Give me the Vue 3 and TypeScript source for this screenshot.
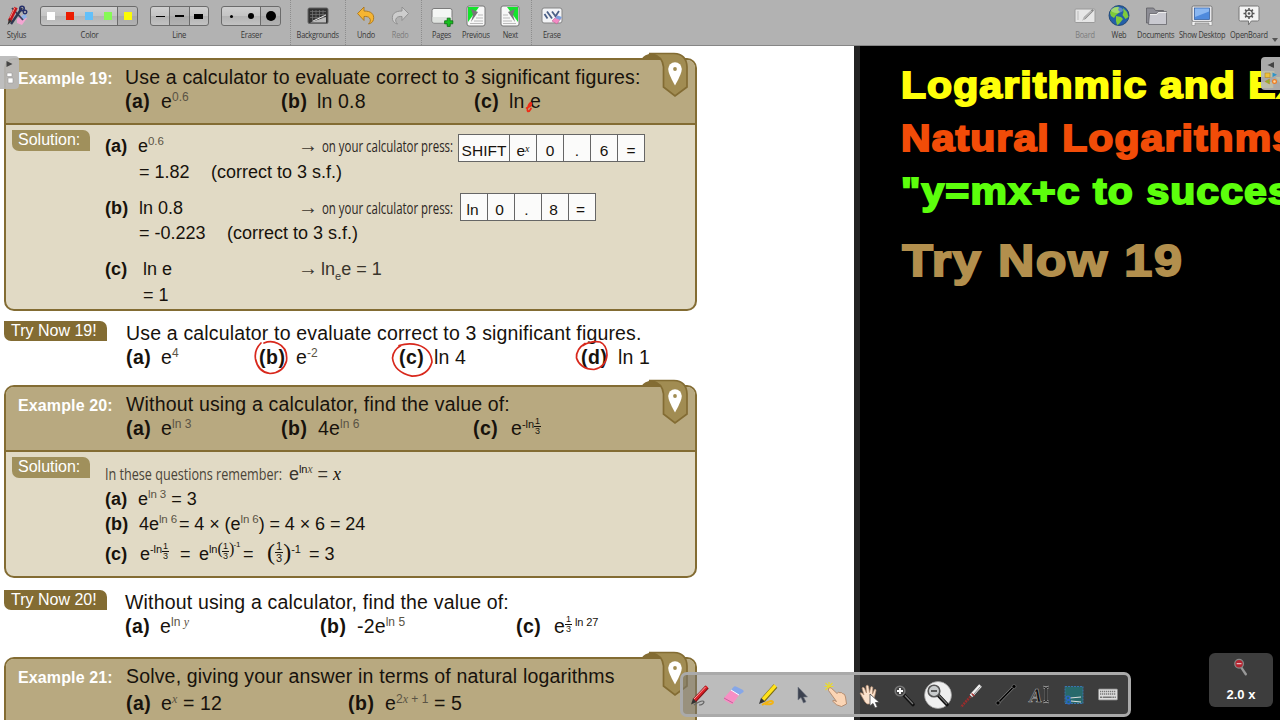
<script setup lang="ts">
interface Part { t: string; c?: string; d?: string }
interface Cell { w: number; c?: string; p: Part[] }
interface Line { c: string; cells: Cell[] }

const b = (t: string): Part => ({ t, c: 'b' })
const n = (t: string): Part => ({ t })
const sup = (t: string): Part => ({ t, c: 'sup' })
const sups = (t: string): Part => ({ t, c: 'sup dark' })
const cell = (w: number, ...p: Part[]): Cell => ({ w, p })
const cond = (w: number, c: string, t: string): Cell => ({ w, c: 'cond ' + c, p: [n(t)] })

const heads: Record<string, Line[]> = {
  h19: [
    { c: 'big', cells: [cell(520, n('Use a calculator to evaluate correct to 3 significant figures:'))] },
    { c: 'big two', cells: [cell(36, b('(a)')), cell(120, n('e'), sup('0.6')), cell(36, b('(b)')), cell(157, n('ln 0.8')), cell(35, b('(c)')), cell(60, n('ln e'))] },
  ],
  t19: [
    { c: 'big', cells: [cell(520, n('Use a calculator to evaluate correct to 3 significant figures.'))] },
    { c: 'big two', cells: [cell(35, b('(a)')), cell(98, n('e'), sup('4')), cell(37, b('(b)')), cell(103, n('e'), sup('-2')), cell(35, b('(c)')), cell(147, n('ln 4')), cell(37, b('(d)')), cell(50, n('ln 1'))] },
  ],
  h20: [
    { c: 'big', cells: [cell(520, n('Without using a calculator, find the value of:'))] },
    { c: 'big two', cells: [cell(35, b('(a)')), cell(120, n('e'), sup('ln 3')), cell(37, b('(b)')), cell(155, n('4e'), sup('ln 6')), cell(38, b('(c)')), cell(60, n('e'), sups('-ln'), { t: '1', d: '3', c: 'frac' })] },
  ],
  t20: [
    { c: 'big', cells: [cell(520, n('Without using a calculator, find the value of:'))] },
    { c: 'big two', cells: [cell(35, b('(a)')), cell(160, n('e'), sup('ln '), { t: 'y', c: 'sup it' }), cell(37, b('(b)')), cell(159, n('-2e'), sup('ln 5')), cell(38, b('(c)')), cell(80, n('e'), { t: '1', d: '3', c: 'frac' }, sups(' ln 27'))] },
  ],
  h21: [
    { c: 'big', cells: [cell(520, n('Solve, giving your answer in terms of natural logarithms'))] },
    { c: 'big two', cells: [cell(35, b('(a)')), cell(187, n('e'), { t: 'x', c: 'sup it' }, n(' = 12')), cell(37, b('(b)')), cell(120, n('e'), sup('2'), { t: 'x', c: 'sup it' }, sup(' + 1'), n(' = 5'))] },
  ],
}

const body19: Line[] = [
  { c: 'l1', cells: [cell(33, b('(a)')), cell(161, n('e'), sup('0.6')), cell(23, { t: '→', c: 'arr' }), cond(135, 'c1', 'on your calculator press:')] },
  { c: 'l2', cells: [cell(34), cell(72, n('= 1.82')), cell(140, n('(correct to 3 s.f.)'))] },
  { c: 'l3', cells: [cell(34, b('(b)')), cell(160, n('ln 0.8')), cell(23, { t: '→', c: 'arr' }), cond(135, 'c1', 'on your calculator press:')] },
  { c: 'l4', cells: [cell(34), cell(88, n('= -0.223')), cell(140, n('(correct to 3 s.f.)'))] },
  { c: 'l5', cells: [cell(38, b('(c)')), cell(156, n('ln e')), cell(22, { t: '→', c: 'arr' }), cell(80, { t: 'ln', c: 'mid' }, { t: 'e', c: 'sub' }, { t: 'e = 1', c: 'mid' })] },
  { c: 'l6', cells: [cell(38), cell(60, n('= 1'))] },
]
const body20: Line[] = [
  { c: 'm1', cells: [cond(184, 'c2', 'In these questions remember:'), cell(70, { t: 'e', c: 'mid' }, { t: 'ln', c: 'sup hi dark' }, { t: 'x', c: 'sup hi it' }, { t: ' = ', c: 'mid' }, { t: 'x', c: 'itx' })] },
  { c: 'm2', cells: [cell(33, b('(a)')), cell(80, n('e'), sup('ln 3'), n(' = 3'))] },
  { c: 'm3', cells: [cell(34, b('(b)')), cell(40, n('4e'), sup('ln 6')), cell(220, n('= 4 × (e'), sup('ln 6'), n(') = 4 × 6 = 24'))] },
  {
    c: 'm4', cells: [cell(35, b('(c)')), cell(40, n('e'), sups('-ln'), { t: '1', d: '3', c: 'frac' }), cell(19, n('=')),
      cell(44, n('e'), sups('ln'), { t: '(', c: 'paren up' }, { t: '1', d: '3', c: 'frac' }, { t: ')', c: 'paren up' }, { t: '-1', c: 'sup dark top' }),
      cell(24, n('=')), cell(42, { t: '(', c: 'paren big-p' }, { t: '1', d: '3', c: 'frac large' }, { t: ')', c: 'paren big-p' }, sups('-1')), cell(40, n('= 3'))],
  },
]
const keys1 = ['SHIFT', 'ex', '0', '.', '6', '=']
const keys2 = ['ln', '0', '.', '8', '=']

const swatches = ['#ffffff', '#ec1c00', '#62c0fa', '#86f955', '#fcfc04']
interface Tool { id: string; label: string; w: number; gap?: number; end?: number; sep?: boolean; off?: boolean }
const leftTools: Tool[] = [
  { id: 'bg', label: 'Backgrounds', w: 54, sep: true },
  { id: 'undo', label: 'Undo', w: 34, gap: 3, sep: true },
  { id: 'redo', label: 'Redo', w: 34, end: 4, off: true },
  { id: 'pages', label: 'Pages', w: 34, gap: 3, sep: true },
  { id: 'prev', label: 'Previous', w: 34 },
  { id: 'next', label: 'Next', w: 34, end: 4 },
  { id: 'erase', label: 'Erase', w: 34, gap: 3, sep: true },
]
const rightTools: Tool[] = [
  { id: 'board', label: 'Board', w: 34, off: true },
  { id: 'web', label: 'Web', w: 34 },
  { id: 'docs', label: 'Documents', w: 40 },
  { id: 'desk', label: 'Show Desktop', w: 53 },
  { id: 'open', label: 'OpenBoard', w: 41 },
]
const palette = ['pen', 'rub', 'marker', 'arrow', 'touch', 'palm', 'zin', 'zout', 'laser', 'line', 'text', 'capture', 'keyb']
</script>

<template>
  <div class="app">
    <header class="bar">
      <div class="tool stylus">
        <svg width="22" height="22" viewBox="0 0 22 22">
          <path d="M11 14l5-4 5 3-5 7-5-2z" fill="#f3a6d2" /><path d="M15 11l4-2 2 3-4 3z" fill="#8fb4ea" />
          <path d="M6 3l11 12" stroke="#39425c" stroke-width="1.800" /><path d="M16 3L5 19" stroke="#2f3650" stroke-width="2.400" />
          <circle cx="16" cy="3.500" r="2.200" fill="none" stroke="#27306a" stroke-width="1.600" /><circle cx="19" cy="7" r="1.800" fill="none" stroke="#27306a" stroke-width="1.400" />
          <path d="M10 2.500L3.500 16" stroke="#c4161c" stroke-width="3.600" /><path d="M3 14L1.500 20l4.500-4z" fill="#333" />
          <path d="M9 2.500L3.800 13" stroke="#f28a7c" stroke-width="1" />
        </svg>
        <span class="lab">Stylus</span>
      </div>
      <div class="group color">
        <div class="box"><i v-for="s in swatches" :key="s" class="sw"><b :style="{ background: s }"></b></i></div>
        <span class="lab">Color</span>
      </div>
      <div class="group lines">
        <div class="box"><i><b class="ln a"></b></i><i><b class="ln b2"></b></i><i><b class="ln c3"></b></i></div>
        <span class="lab">Line</span>
      </div>
      <div class="group era">
        <div class="box"><i><b class="dot d1"></b></i><i><b class="dot d2"></b></i><i><b class="dot d3"></b></i></div>
        <span class="lab">Eraser</span>
      </div>
      <div class="tools first">
        <div v-for="t in leftTools" :key="t.id" class="slot" :class="{ sep: t.sep }">
          <div class="tool" :class="{ off: t.off }" :style="{ width: t.w + 'px', marginLeft: (t.gap ?? 0) + 'px', marginRight: (t.end ?? 0) + 'px' }">
            <svg width="24" height="22" viewBox="0 0 24 22">
              <g v-if="t.id === 'bg'">
                <rect x="2" y="3" width="20" height="15.500" rx="1.500" fill="#333" stroke="#666" />
                <path d="M4 6.500h16M4 9.500h16M4 12.500h16M6.500 5v12M10 5v12M13.500 5v12M17 5v12" stroke="#777" stroke-width=".7" />
                <path d="M4 17.500L20 12v5.500z" fill="#bbb" /><path d="M7 16l13-6" stroke="#e5e5e5" />
              </g>
              <path v-else-if="t.id === 'undo'" d="M3.500 8.500L10 2v4c7 0 10.500 3 9.500 8.500-.5 2.500-2.500 4-5 4.500 2-2 2.500-4 1-6-1-1.300-3-1.700-5.500-1.500v4z" fill="#f6b532" stroke="#a9751c" stroke-width=".9" />
              <path v-else-if="t.id === 'redo'" d="M20.500 8.500L14 2v4C7 6 3.500 9 4.500 14.500c.5 2.500 2.500 4 5 4.500-2-2-2.500-4-1-6 1-1.300 3-1.700 5.500-1.500v4z" fill="#cdcdcd" stroke="#8c8c8c" stroke-width=".9" />
              <g v-else-if="t.id === 'pages'">
                <rect x="2" y="3.500" width="20" height="14.500" rx="2" fill="#f4f6f4" stroke="#7b7b7b" /><path d="M2.500 12h19v4.500q0 1-1 1h-17q-1 0-1-1z" fill="#dfe3df" />
                <path d="M17.200 13.200h3v2.600h2.600v3h-2.600v2.600h-3v-2.600h-2.600v-3h2.600z" fill="#17c01f" stroke="#0a6b10" stroke-width=".8" />
              </g>
              <g v-else-if="t.id === 'prev' || t.id === 'next'" :transform="t.id === 'next' ? 'matrix(-1 0 0 1 24 0)' : undefined">
                <rect x="3" y="1" width="18" height="20" rx="2" fill="#f7f7f7" stroke="#777" />
                <path d="M4 2h11L4 17z" fill="#14e32c" /><path d="M7 4l7 3-7 10 2-7z" fill="#777" />
                <path d="M14 10h5M12 13h7M10 16h9M6 18.500h13" stroke="#aaa" stroke-width=".8" />
              </g>
              <g v-else>
                <rect x="2" y="3" width="20" height="15" rx="2" fill="#f3f4f6" stroke="#858585" />
                <path d="M4.500 9l3 4.500M7 6.500l5 7M12 6.500l3 4M19 6l-4 6" stroke="#4a5f86" stroke-width="1.800" fill="none" />
                <path d="M12 16l5-5 4 2-4 6z" fill="#f48ac4" stroke="#b35a8b" stroke-width=".5" /><path d="M15 13l2.500-2.500L22 12l-2 3z" fill="#7ea1dd" />
              </g>
            </svg>
            <span class="lab">{{ t.label }}</span>
          </div>
        </div>
      </div>
      <div class="tools last">
        <div v-for="t in rightTools" :key="t.id" class="tool" :class="{ off: t.off }" :style="{ width: t.w + 'px' }">
          <svg width="24" height="22" viewBox="0 0 24 22">
            <g v-if="t.id === 'board'">
              <rect x="2" y="4" width="20" height="13.500" rx="1" fill="#e6e6e6" stroke="#9a9a9a" /><path d="M5 6v9" stroke="#bbb" />
              <path d="M9 15.500l2-3.500L19.500 4 21 5.500 12.500 14z" fill="#888" /><path d="M9.500 15l9-9" stroke="#fff" stroke-width=".7" />
            </g>
            <g v-else-if="t.id === 'web'">
              <circle cx="12" cy="10.500" r="10" fill="#245fa8" stroke="#173e6c" stroke-width=".8" />
              <path d="M4 5q4-4 8-3l-1 3 2 2-4 3-2 3-3-2-1-3zM9 11l5 1 2 2-4 5-2 1-1-4zM16 3l4 4 1.500 5-3 2-3-4 1-3z" fill="#7fcb3a" />
              <ellipse cx="10" cy="5" rx="6" ry="3" fill="#fff" opacity=".28" />
            </g>
            <g v-else-if="t.id === 'docs'">
              <path d="M2.500 18V3h7l2 2.500h8V18z" fill="#8d8d95" stroke="#5d5d63" stroke-width=".8" />
              <path d="M5.500 8.500h7l1.500-2h8.500v13h-18z" fill="#c9c9d0" stroke="#66666c" stroke-width=".8" /><path d="M6 9.500h7l1.500-2h8" stroke="#eee" fill="none" />
            </g>
            <g v-else-if="t.id === 'desk'">
              <rect x="2" y="1" width="20" height="15.500" rx="1.500" fill="#e7e7ea" stroke="#777" /><rect x="4.500" y="3" width="15" height="11.500" fill="#4f8add" stroke="#2d5799" stroke-width=".7" />
              <path d="M5 3.500h14v3L5 12z" fill="#8ab7f2" /><path d="M2 16.500v4h3v-2.500h14v2.500h3v-4z" fill="#f2f2f2" stroke="#888" stroke-width=".6" />
            </g>
            <g v-else>
              <path d="M3.500 1h17q1.500 0 1.500 1.500v12q0 1.500-1.500 1.500h-6.200L11.500 20v-4h-8Q2 16 2 14.500v-12Q2 1 3.500 1z" fill="#f4f4f4" stroke="#777" />
              <g stroke="#555" stroke-width="1.500"><path d="M12 3v11M6.500 8.500h11M8.100 4.600l7.800 7.800M15.900 4.600l-7.800 7.800" /></g>
              <circle cx="12" cy="8.500" r="3.300" fill="#f4f4f4" stroke="#555" stroke-width="1.300" /><circle cx="12" cy="8.500" r="1.300" fill="#555" />
            </g>
          </svg>
          <span class="lab">{{ t.label }}</span>
        </div>
        <svg class="drop" width="6" height="4"><path d="M0 0h6L3 4z" fill="#555" /></svg>
      </div>
    </header>

    <main class="board">
      <section class="page">
        <template v-for="num in [19, 20, 21]" :key="num">
          <article class="card" :class="'k' + num">
            <div class="head">
              <div class="side"><span class="ex">Example {{ num }}:</span></div>
              <div>
                <div v-for="(l, i) in heads['h' + num]" :key="i" class="line" :class="l.c"><span v-for="(s, j) in l.cells" :key="j" class="cell" :style="{ width: s.w + 'px' }"><template v-for="(p, k) in s.p" :key="k"><span v-if="p.d" :class="p.c"><span class="num">{{ p.t }}</span><span>{{ p.d }}</span></span><span v-else :class="p.c">{{ p.t }}</span></template></span></div>
              </div>
            </div>
            <div v-if="num < 21" class="body">
              <div class="side"><span class="sol">Solution:</span></div>
              <div class="work">
                <div v-for="(l, i) in (num === 19 ? body19 : body20)" :key="i" class="line" :class="l.c"><span v-for="(s, j) in l.cells" :key="j" class="cell" :class="s.c" :style="{ width: s.w + 'px' }"><template v-for="(p, k) in s.p" :key="k"><span v-if="p.d" :class="p.c"><span class="num">{{ p.t }}</span><span>{{ p.d }}</span></span><span v-else :class="p.c">{{ p.t }}</span></template></span></div>
                <template v-if="num === 19">
                  <div class="keys one"><span v-for="k in keys1" :key="k" :class="{ shift: k === 'SHIFT' }"><template v-if="k === 'ex'">e<em>x</em></template><template v-else>{{ k }}</template></span></div>
                  <div class="keys two-k"><span v-for="k in keys2" :key="k">{{ k }}</span></div>
                </template>
              </div>
            </div>
            <svg class="ribbon" width="54" height="46" viewBox="0 0 54 46">
              <path d="M3 8Q6 1.500 15 1.500L26 8z" fill="#836c33" />
              <path d="M11 1.500H36Q48.500 2 49 15V35L37 44 25.500 35V15Q24.500 4 14 2z" fill="#a18c52" stroke="#836c33" stroke-width="1.700" />
              <path d="M37 33.500Q30.200 21.500 30.200 17a6.800 6.800 0 0 1 13.600 0Q43.800 21.500 37 33.500z" fill="#fff" /><circle cx="37" cy="17" r="1.900" fill="#a18c52" />
            </svg>
          </article>
          <article v-if="num < 21" class="try" :class="'y' + num">
            <div class="side"><span class="tag">Try Now {{ num }}!</span></div>
            <div class="ask">
              <div v-for="(l, i) in heads['t' + num]" :key="i" class="line" :class="l.c"><span v-for="(s, j) in l.cells" :key="j" class="cell" :style="{ width: s.w + 'px' }"><template v-for="(p, k) in s.p" :key="k"><span v-if="p.d" :class="p.c"><span class="num">{{ p.t }}</span><span>{{ p.d }}</span></span><span v-else :class="p.c">{{ p.t }}</span></template></span></div>
            </div>
          </article>
        </template>
      </section>
      <section class="black">
        <p class="yel">Logarithmic and Ex</p>
        <p class="ora">Natural Logarithms</p>
        <p class="gre">"y=mx+c to succes</p>
        <p class="tan">Try Now 19</p>
      </section>
      <svg class="ink" width="700" height="400" viewBox="0 0 700 400" fill="none" stroke="#d8281c" stroke-width="1.700" stroke-linecap="round">
        <path d="M526.500 108q5-1.500 5-4.500-1-2-3 2-2 5-.5 6 1.500 0 3-3" stroke="#f02a14" />
        <path d="M261 343Q254 350 255.500 359 258 372 270 373.500 283 373 286.500 361 288 348 278 343.500 271 340 264 343" />
        <path d="M401 345.500Q393 350 392.500 358 394 372 412 376.200 428 376 432 362 431 349 418 345 409 342.500 399 345.500" />
        <path d="M585 343.500Q576 349 576.500 358 580 369 594 369.500 606 367 607 355 607 345 600 342 591 340.500 583 345.500" />
      </svg>
      <div class="tab lt"><svg width="19" height="33"><path d="M6.500 5l6 3-6 3z" fill="#444" /><path d="M7 17h5v3.500H7zM8 22h5v5H8z" fill="#fff" stroke="#999" stroke-width=".6" /></svg></div>
      <div class="tab rt"><svg width="19" height="33"><path d="M13 5L6.500 8l6.500 3z" fill="#444" /><path d="M4 16h5v4.500H4z" fill="#eec23a" stroke="#b5832a" stroke-width=".6" /><path d="M11.500 15.500l4.500 2.300-4.500 2.500z" fill="#2f94c8" /><path d="M8.500 22L4 24.500 8.500 27z" fill="#8cb32e" stroke="#c28a22" stroke-width=".6" /><circle cx="13.500" cy="24.500" r="1.900" fill="#ffd9a0" stroke="#ee7b22" stroke-width="1.200" /></svg></div>
      <div class="palette">
        <span v-for="p in palette" :key="p" class="pi">
          <svg width="30" height="30" viewBox="0 0 30 30">
            <g v-if="p === 'pen'"><path d="M9 25q9-6 10-3-1 3-5 3" fill="none" stroke="#666" stroke-width="1.200" /><path d="M22 7L9.500 20.500" stroke="#7d1014" stroke-width="4.600" /><path d="M22 6.500L9.500 20" stroke="#dc2128" stroke-width="3" /><path d="M20.500 7L9 19" stroke="#f7b5b5" stroke-width=".9" /><path d="M8 18.500l3.500 3.500L6 24.500z" fill="#333" /></g>
            <g v-else-if="p === 'rub'"><path d="M5 18L12 10l8 5-6 8.500q-1 1-3 0l-5-3q-1.500-1-1-2.500z" fill="#f78fc4" /><path d="M12 10l2.500-3q1-1 2.500-.5L24 10q1 .8.500 2L20 15z" fill="#86a7e8" /><path d="M12 10l8 5" stroke="#fff" /><path d="M5 18l9 5" stroke="#c4649a" stroke-width="1" /></g>
            <g v-else-if="p === 'marker'"><path d="M9 25q10-6 11-3 0 3-8 2" fill="none" stroke="#f2b414" stroke-width="2" /><path d="M22.500 6L10 20" stroke="#7a6b10" stroke-width="5" /><path d="M22.500 5.500L10 19.500" stroke="#ffe21c" stroke-width="3.400" /><path d="M8 18l4 3.500L6 24z" fill="#333" /></g>
            <path v-else-if="p === 'arrow'" d="M11 7v13l3-2.500 2.500 5.500 2.500-1.200L16.500 17h4z" fill="#3c4250" stroke="#737984" stroke-width=".6" />
            <g v-else-if="p === 'touch'"><path d="M8 2v9M3.500 6.500h9M4.500 3l7 7M11.500 3l-7 7" stroke="#e8d930" stroke-width="1.100" /><path d="M7.500 8.500q1.500-1.800 3.200 0l5.300 5q1-2 3-.8 1.500-.7 2.500.8 2.500 0 3 3.500l1 7-5 2.500q-5-.5-9-5.500 1-1.500 4 .5L7.500 10.500z" fill="#fbd5b5" stroke="#a97e60" stroke-width=".8" /></g>
            <g v-else-if="p === 'palm'"><path d="M10 22q-3-5-5-9 1.500-1 4 2L7 8q1-1.500 2.300 0l2.200 5L11 6q1.300-1.500 2.500 0l1 6.500L15.800 7q1.300-1 2 .5l-.3 6.500 2-4.500q1.500-.6 1.500 1L19 19q0 3-2 5h-5z" fill="#fbe2cd" stroke="#b58c70" stroke-width=".7" /><path d="M15 14v12l3-2.500 2 4.500 2.400-1.100-2-4.400h4z" fill="#fff" stroke="#444" stroke-width=".8" /></g>
            <g v-else-if="p === 'zin' || p === 'zout'"><circle v-if="p === 'zout'" cx="15" cy="15" r="13.500" fill="#efefef" stroke="#999" stroke-width=".7" /><path d="M15 15l9 9.500" stroke="#111" stroke-width="3.600" stroke-linecap="round" /><path d="M16 15.500l8 8.500" stroke="#777" stroke-width="1.200" /><circle cx="11" cy="11" :r="p === 'zin' ? 4.800 : 5.800" :fill="p === 'zin' ? '#444' : '#c8cbcc'" :stroke="p === 'zin' ? '#777' : '#555'" stroke-width="1.600" /><path v-if="p === 'zin'" d="M8 11h6M11 8v6" stroke="#fff" stroke-width="1.900" /><path v-else d="M8 11h6" stroke="#444" stroke-width="1.700" /></g>
            <g v-else-if="p === 'laser'"><path d="M13.500 16.500L4 27" stroke="#b02a2a" stroke-width="2.500" opacity=".8" stroke-dasharray="2 .8" /><path d="M23.500 5.500L14 16" stroke="#f2f2f2" stroke-width="3.600" /><path d="M23.500 6.500L14 17.500" stroke="#888" stroke-width="1" /><path d="M14.500 13.500l3 2.500" stroke="#a33" stroke-width="1.500" /></g>
            <g v-else-if="p === 'line'" fill="#000" stroke="#8a8a8a" stroke-width=".5"><path d="M6.500 23.500L23.500 6" stroke="#8a8a8a" stroke-width="2.600" /><path d="M6.500 23.500L23.500 6" stroke="#000" stroke-width="1.700" /><circle cx="7" cy="23" r="2" /><circle cx="23" cy="6.500" r="2" /></g>
            <g v-else-if="p === 'text'"><text x="4.500" y="22" class="ai">A</text><path d="M18 7q3 0 3 2v11q0 2-3 2M24 7q-3 0-3 2v11q0 2 3 2" fill="none" stroke="#aaa" stroke-width="2.400" /><path d="M18 7q3 0 3 2v11q0 2-3 2M24 7q-3 0-3 2v11q0 2 3 2" fill="none" stroke="#111" stroke-width="1" /></g>
            <g v-else-if="p === 'capture'"><rect x="6" y="6.500" width="18" height="17" fill="#28696b" stroke="#3c77b8" stroke-width=".9" stroke-dasharray="2 1" /><path d="M11 18l11-1M12 21l10 1" stroke="#ddd" stroke-width="1.100" /><circle cx="9" cy="18" r="1.900" fill="none" stroke="#2b65c4" stroke-width="1.400" /><circle cx="9.500" cy="22" r="1.900" fill="none" stroke="#2b65c4" stroke-width="1.400" /></g>
            <g v-else><rect x="5.500" y="9" width="19" height="11" rx="1" fill="#ddd" stroke="#888" stroke-width=".8" /><path d="M7 11.500h16M7 14h16" stroke="#777" stroke-width="1.500" stroke-dasharray="1.300 .7" /><path d="M7 17.300h16" stroke="#777" stroke-width="1.500" stroke-dasharray="2 .7 9 .7" /></g>
          </svg>
        </span>
      </div>
      <div class="zoom">
        <svg width="20" height="24" viewBox="0 0 20 24"><path d="M9 9l6 9" stroke="#999" stroke-width="2.400" stroke-linecap="round" /><circle cx="8" cy="7" r="4.500" fill="#b32430" stroke="#888" stroke-width="1.300" /><path d="M5.500 7h5" stroke="#eee" stroke-width="1" /></svg>
        <span>2.0 x</span>
      </div>
    </main>
  </div>
</template>

<style scoped>
.app { width: 1280px; height: 720px; overflow: hidden; display: flex; flex-direction: column; font-family: "Liberation Sans", Arial, sans-serif; color: #17120c; background: #fff; }
.bar { height: 45px; flex: none; background: #b2b2b2; border-bottom: 1px solid #868686; display: flex; align-items: flex-start; }
.tool { display: flex; flex-direction: column; align-items: center; padding-top: 5px; flex: none; }
.tool svg { display: block; flex: none; }
.lab { font: 9px/12px "Open Sans", "Noto Sans", sans-serif; letter-spacing: -.3px; color: #383838; white-space: nowrap; margin-top: 2px; transform: scaleX(.82); }
.off .lab { color: #7d7d7d; }
.stylus { width: 33px; margin-right: 7px; }
.group { display: flex; flex-direction: column; align-items: center; padding-top: 6px; flex: none; }
.group .lab { margin-top: 3px; }
.stylus .lab, .group .lab { transform: scaleX(.85); }
.box { box-sizing: border-box; height: 20px; width: 100%; border: 1px solid #6b6b6b; border-radius: 3px; display: flex; background: linear-gradient(#d0d0d0, #c4c4c4 50%, #b4b4b4 52%, #c2c2c2); overflow: hidden; }
.box i { flex: 1; display: flex; align-items: center; justify-content: center; }
.color { width: 98px; margin-right: 12px; }
.lines { width: 59px; margin-right: 12px; }
.era { width: 60px; margin-right: 9px; }
.sw b { width: 8px; height: 8px; }
.sw:last-child, .lines i:nth-child(2), .era i:last-child { border-left: 1px solid #6b6b6b; background: rgba(150, 150, 150, .35); }
.lines i:nth-child(2) { border-right: 1px solid #6b6b6b; }
.ln { background: #000; }
.a { width: 9px; height: 1px; } .b2 { width: 9px; height: 2px; } .c3 { width: 9px; height: 5px; }
.dot { background: #000; border-radius: 50%; }
.d1 { width: 3px; height: 3px; } .d2 { width: 6px; height: 6px; } .d3 { width: 10px; height: 10px; }
.tools { display: flex; }
.slot.sep { border-left: 1px dotted #8d8d8d; height: 45px; }
.last { margin-left: auto; padding-right: 2.5px; }
.drop { align-self: flex-end; margin: 0 0 -1px 2px; }

.board { flex: 1; min-height: 0; display: flex; position: relative; overflow: hidden; }
.page { width: 854px; flex: none; background: #fff; padding: 12px 0 0 4px; box-sizing: border-box; }
.black { flex: 1; min-width: 0; background: #000; border-left: 6px solid #222; padding: 13px 0 0 41px; overflow: hidden; }
.black p { margin: 0; white-space: nowrap; font-weight: 700; font-size: 37.5px; line-height: 53px; letter-spacing: 1px; transform: scaleX(1.092); transform-origin: 0 0; -webkit-text-stroke: 1.9px currentColor; }
.yel { color: #ffff0a; } .ora { color: #f24c08; } .gre { color: #5cff0c; }
.black .tan { color: #b28f4d; font-size: 44.5px; line-height: 60px; margin-top: 13px; padding-left: 1px; letter-spacing: 1.4px; transform: scaleX(1.13); }

.card { position: relative; box-sizing: border-box; width: 693px; border: 2px solid #836c33; border-radius: 10px; background: #e1dac5; }
.head { box-sizing: border-box; display: flex; height: 65px; border-bottom: 2px solid #836c33; border-radius: 8px 8px 0 0; background: #b8a980; padding-top: 4px; }
.k19 { height: 253px; } .k20 { height: 193px; } .k21 { height: 100px; }
.k21 .head { height: 75px; } .k21 .two { margin-top: 3px; }
.side { flex: none; width: 120px; }
.k19 .head .side { width: 119px; }
.ex { display: block; margin-left: 12px; font-weight: 700; font-size: 16px; letter-spacing: .13px; line-height: 30px; color: #fff; white-space: nowrap; }
.body { display: flex; padding-top: 5px; }
.body .side, .k19 .body .side { width: 99px; }
.sol, .tag { display: block; color: #fff; font-size: 16px; line-height: 20px; border-radius: 0 7px 0 7px; box-sizing: border-box; white-space: nowrap; }
.sol { width: 78px; height: 21px; margin-left: 6px; padding-left: 6px; background: #a0905c; }
.tag { width: 103px; height: 20px; background: #836c33; padding-left: 7px; }
.try { display: flex; height: 64px; padding-top: 10px; }
.try .side { width: 122px; }
.try .ask { margin-top: -1px; }
.y20 { height: 67px; padding-top: 12px; }
.y20 .side { width: 121px; }
.line { white-space: pre; height: 25px; line-height: 25px; font-size: 18px; }
.big { font-size: 19.5px; letter-spacing: .17px; height: 24px; line-height: 26px; }
.cell { display: inline-block; white-space: pre; vertical-align: baseline; }
.b { font-weight: 700; letter-spacing: .5px; }
.work .b { letter-spacing: .1px; }
.sup { font-size: 12px; line-height: 0; position: relative; top: -7px; color: #5a5344; letter-spacing: 0; }
.work .sup { font-size: 11.5px; letter-spacing: -.1px; }
.m3 { letter-spacing: -.07px; }
.sup.dark, .work .sup.dark { color: #17120c; font-size: 11px; letter-spacing: -.1px; }
.sub { font-size: 11px; line-height: 0; position: relative; top: 5px; color: #333; }
.it, .itx { font-family: "Liberation Serif", serif; font-style: italic; }
.mid { color: #3a352c; }
.arr { font-family: "Liberation Serif", "DejaVu Sans", serif; font-size: 20px; line-height: 0; color: #3a352c; position: relative; left: -1px; }
.frac { display: inline-flex; flex-direction: column; align-items: center; font-size: 9px; line-height: 8.5px; height: 17px; vertical-align: 11px; margin: -14px 0 -14px; color: #17120c; letter-spacing: 0; }
.frac .num { border-bottom: 1px solid currentColor; padding: 0 1px; }
.large { font-size: 11px; line-height: 11px; height: 22px; vertical-align: 10px; }
.paren { font-family: "Liberation Serif", serif; font-size: 16px; line-height: 0; position: relative; top: -6px; letter-spacing: -.8px; }
.paren.big-p { font-size: 24px; top: 0; letter-spacing: 0; }
.work .sup.dark.top { font-size: 8px; top: -13px; }
.cond > span { display: inline-block; transform-origin: 0 50%; font-family: "Open Sans", sans-serif; font-size: 17px; }
.cond.c1 > span { transform: scaleX(.672); color: #2c271f; }
.cond.c2 > span { transform: scaleX(.742); color: #4a4438; }
.cond { line-height: 0; }
.work { position: relative; }
.l1 { margin-top: 4px; } .l2 { margin-top: 1px; } .l3 { margin-top: 11px; } .l5 { margin-top: 11px; } .l6 { margin-top: .5px; }
.m1 { margin-top: 5px; } .m4 { margin-top: 5px; }
.keys { position: absolute; display: flex; background: #fbfbfa; border: 1px solid #666; font-size: 15.5px; line-height: 31px; height: 26px; }
.keys span { width: 26px; text-align: center; border-left: 1px solid #666; }
.keys span:first-child { border-left: 0; }
.keys .shift { width: 50px; }
.keys em { font: italic 10px/0 "Liberation Serif", serif; position: relative; top: -4px; }
.one { left: 353px; top: 4px; }
.two-k { left: 355px; top: 63px; }
.two-k span { text-indent: -3px; }
.ribbon { position: absolute; right: 3px; top: -8px; }
.ink { position: absolute; left: 0; top: -46px; pointer-events: none; }

.tab { position: absolute; width: 19px; height: 33px; background: rgba(184, 184, 184, .92); }
.lt { left: 0; top: 10px; border-radius: 0 4px 4px 0; }
.rt { right: 0; top: 11px; border-radius: 4px 0 0 4px; }
.palette { position: absolute; left: 680px; top: 626px; width: 451px; height: 45px; box-sizing: border-box; border: 3px solid #aaa; border-radius: 7px; background: rgba(122, 122, 122, .5); display: flex; align-items: center; padding-left: 0; }
.pi { width: 34px; display: flex; justify-content: center; flex: none; }
.ai { font: italic 700 19px "Liberation Serif", serif; fill: #111; stroke: #aaa; stroke-width: .6px; }
.zoom { position: absolute; left: 1209px; top: 607px; width: 64px; height: 54px; border-radius: 6px; background: #3d3d3d; color: #fff; display: flex; flex-direction: column; align-items: center; padding-top: 4px; box-sizing: border-box; font-weight: 700; font-size: 13px; line-height: 24px; }
.zoom span { margin-top: 3px; }
</style>

<style>
body { margin: 0; overflow: hidden; }
</style>
